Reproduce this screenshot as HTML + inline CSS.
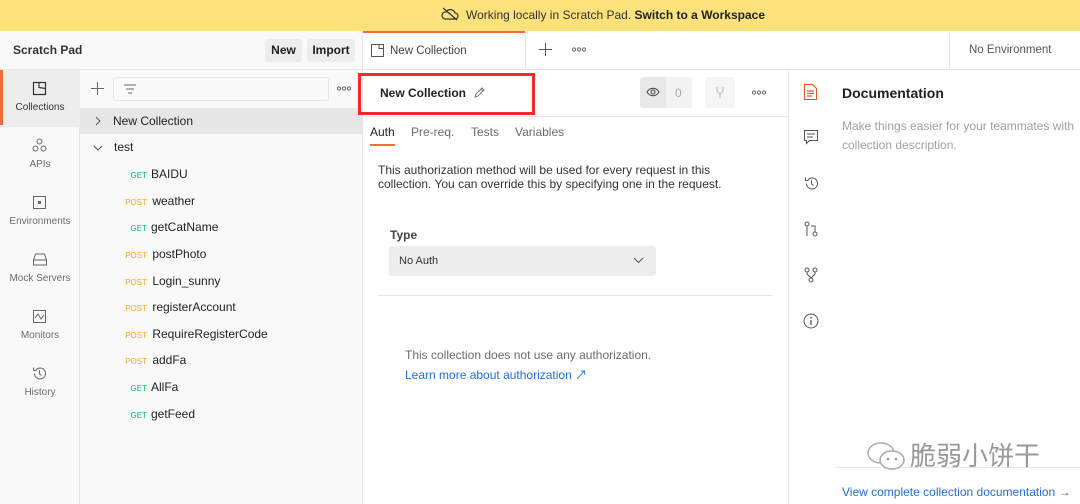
<!DOCTYPE html>
<html><head><meta charset="utf-8"><style>
*{box-sizing:border-box;margin:0;padding:0}
body{width:1080px;height:504px;overflow:hidden;background:#fff;font-family:"Liberation Sans","Noto Sans CJK SC",sans-serif;font-size:12px;color:#212121;position:relative}
.a{position:absolute}
.banner{left:0;top:0;width:1080px;height:31px;background:#fde17a;line-height:31px;font-size:12px;color:#333;padding-left:441px}
.get{color:#0cbb52;font-size:8px;display:inline-block;width:20px;text-align:right;margin-right:4px}
.post{color:#f5a623;font-size:8px;display:inline-block;width:24px;text-align:right;margin-right:2px}
.side{font-size:10px;color:#6b6b6b;text-align:center;width:78px}
.item{left:80px;width:282px;height:26px;line-height:26px;font-size:12px;color:#212121}
</style></head><body>
<div class="a banner"><svg width="18" height="14" viewBox="0 0 18 14" style="vertical-align:-2px;margin-right:7px"><path d="M4 12h10a3 3 0 0 0 0-6 5 5 0 0 0-9-1A3.5 3.5 0 0 0 4 12zM2 1l14 12" fill="none" stroke="#333" stroke-width="1.2"/></svg>Working locally in Scratch Pad. <b style="color:#222">Switch to a Workspace</b></div>
<div class="a" style="left:0;top:31px;width:363px;height:39px;background:#f9f9f9;border-bottom:1px solid #e6e6e6;border-right:1px solid #e6e6e6"></div>
<div class="a" style="left:13px;top:43px;font-size:12px;font-weight:bold;color:#333">Scratch Pad</div>
<div class="a" style="left:265px;top:39px;width:37px;height:23px;background:#ededed;border-radius:3px;text-align:center;line-height:23px;font-weight:bold;font-size:12px">New</div>
<div class="a" style="left:307px;top:39px;width:48px;height:23px;background:#ededed;border-radius:3px;text-align:center;line-height:23px;font-weight:bold;font-size:12px">Import</div>
<div class="a" style="left:0;top:70px;width:80px;height:434px;background:#f9f9f9;border-right:1px solid #e6e6e6"></div>
<div class="a" style="left:0;top:70px;width:3px;height:55px;background:#f26b3a"></div>
<div class="a" style="left:3px;top:70px;width:77px;height:57px;background:#ededed"></div>
<svg class="a" style="left:32px;top:81px" width="15" height="15"><path d="M1.5 1.5h12v12h-12zM7 1.5v5l6.5 1" fill="none" stroke="#333" stroke-width="1.2"/></svg>
<div class="a side" style="left:1px;top:102px;color:#333">Collections</div>
<svg class="a" style="left:32px;top:138px" width="15" height="15"><circle cx="7.5" cy="3.5" r="2.5" fill="none" stroke="#666"/><circle cx="3.5" cy="10.5" r="2.5" fill="none" stroke="#666"/><circle cx="11.5" cy="10.5" r="2.5" fill="none" stroke="#666"/></svg>
<div class="a side" style="left:1px;top:159px">APIs</div>
<svg class="a" style="left:32px;top:195px" width="15" height="15"><rect x="1.5" y="1.5" width="12" height="12" fill="none" stroke="#666"/><rect x="6" y="6" width="3" height="3" fill="#666"/></svg>
<div class="a side" style="left:1px;top:216px">Environments</div>
<svg class="a" style="left:32px;top:252px" width="16" height="15"><path d="M1.5 8l2-6h9l2 6v5h-13zM1.5 8h13" fill="none" stroke="#666"/></svg>
<div class="a side" style="left:1px;top:273px">Mock Servers</div>
<svg class="a" style="left:32px;top:309px" width="15" height="15"><rect x="1.5" y="1.5" width="12" height="12" fill="none" stroke="#666"/><path d="M3 9l3-4 3 5 3-4" fill="none" stroke="#666"/></svg>
<div class="a side" style="left:1px;top:330px">Monitors</div>
<svg class="a" style="left:32px;top:366px" width="15" height="15"><path d="M2.5 7.5a5.5 5.5 0 1 0 1.6-3.9M1.5 1.5v3h3M7.5 4.5v3.5l2 1.5" fill="none" stroke="#666"/></svg>
<div class="a side" style="left:1px;top:387px">History</div>
<div class="a" style="left:80px;top:70px;width:283px;height:434px;background:#f9f9f9;border-right:1px solid #e6e6e6"></div>
<svg class="a" style="left:91px;top:82px" width="13" height="13"><path d="M6.5 0v13M0 6.5h13" stroke="#666"/></svg>
<div class="a" style="left:113px;top:77px;width:216px;height:24px;border:1px solid #e6e6e6;background:#f9f9f9;border-radius:3px"></div>
<svg class="a" style="left:123px;top:83px" width="14" height="12"><path d="M1 2h12M3 6h8M5 10h4" stroke="#666"/></svg>
<svg class="a" style="left:337px;top:86px" width="14" height="5"><circle cx="2" cy="2.5" r="1.6" fill="none" stroke="#666"/><circle cx="7" cy="2.5" r="1.6" fill="none" stroke="#666"/><circle cx="12" cy="2.5" r="1.6" fill="none" stroke="#666"/></svg>
<div class="a" style="left:80px;top:108px;width:282px;height:26px;background:#e6e6e6"></div>
<svg class="a" style="left:95px;top:116px" width="6" height="10"><path d="M1 1l4 4-4 4" fill="none" stroke="#555"/></svg>
<div class="a item" style="top:108px;padding-left:33px">New Collection</div>
<svg class="a" style="left:93px;top:145px" width="10" height="6"><path d="M1 1l4 4 4-4" fill="none" stroke="#555"/></svg>
<div class="a item" style="top:134px;padding-left:34px">test</div>
<div class="a item" style="top:161px;padding-left:47px"><span class="get">GET</span>BAIDU</div>
<div class="a item" style="top:188px;padding-left:43px"><span class="post">POST</span> weather</div>
<div class="a item" style="top:214px;padding-left:47px"><span class="get">GET</span>getCatName</div>
<div class="a item" style="top:241px;padding-left:43px"><span class="post">POST</span> postPhoto</div>
<div class="a item" style="top:268px;padding-left:43px"><span class="post">POST</span> Login_sunny</div>
<div class="a item" style="top:294px;padding-left:43px"><span class="post">POST</span> registerAccount</div>
<div class="a item" style="top:321px;padding-left:43px"><span class="post">POST</span> RequireRegisterCode</div>
<div class="a item" style="top:347px;padding-left:43px"><span class="post">POST</span> addFa</div>
<div class="a item" style="top:374px;padding-left:47px"><span class="get">GET</span>AllFa</div>
<div class="a item" style="top:401px;padding-left:47px"><span class="get">GET</span>getFeed</div>
<div class="a" style="left:363px;top:31px;width:717px;height:39px;border-bottom:1px solid #e6e6e6"></div>
<div class="a" style="left:363px;top:31px;width:162px;height:2px;background:#f26b3a"></div>
<div class="a" style="left:525px;top:33px;width:1px;height:37px;background:#e6e6e6"></div>
<svg class="a" style="left:371px;top:44px" width="13" height="13"><path d="M.5.5h12v12H.5zM8 .5v4h4.5" fill="none" stroke="#555"/></svg>
<div class="a" style="left:390px;top:45px;color:#444;font-size:11.5px">New Collection</div>
<svg class="a" style="left:539px;top:43px" width="13" height="13"><path d="M6.5 0v13M0 6.5h13" stroke="#555"/></svg>
<svg class="a" style="left:572px;top:47px" width="14" height="5"><circle cx="2" cy="2.5" r="1.6" fill="none" stroke="#666"/><circle cx="7" cy="2.5" r="1.6" fill="none" stroke="#666"/><circle cx="12" cy="2.5" r="1.6" fill="none" stroke="#666"/></svg>
<div class="a" style="left:949px;top:33px;width:1px;height:37px;background:#e6e6e6"></div>
<div class="a" style="left:969px;top:44px;color:#555;font-size:11.5px">No Environment</div>
<div class="a" style="left:363px;top:116px;width:425px;height:1px;background:#e6e6e6"></div>
<div class="a" style="left:380px;top:86px;font-weight:bold;font-size:12px">New Collection</div>
<svg class="a" style="left:474px;top:86px" width="12" height="12"><path d="M1 11l1-3 6-6 2 2-6 6zM7 3l2 2" fill="none" stroke="#777"/></svg>
<div class="a" style="left:358px;top:73px;width:177px;height:42px;border:3px solid #ef2b2b"></div>
<div class="a" style="left:640px;top:77px;width:52px;height:31px;background:#f2f2f2;border-radius:3px"></div>
<div class="a" style="left:640px;top:77px;width:26px;height:31px;background:#e8e8e8;border-radius:3px 0 0 3px"></div>
<svg class="a" style="left:646px;top:86px" width="14" height="12"><path d="M1 6c3-5 9-5 12 0-3 5-9 5-12 0z" fill="none" stroke="#444"/><circle cx="7" cy="6" r="2" fill="none" stroke="#444"/></svg>
<div class="a" style="left:675px;top:86px;color:#aaa">0</div>
<div class="a" style="left:705px;top:77px;width:30px;height:31px;background:#f5f5f5;border-radius:3px"></div>
<svg class="a" style="left:714px;top:86px" width="12" height="13"><path d="M3 1v4l3 3 3-3V1M6 8v4" fill="none" stroke="#bbb"/></svg>
<svg class="a" style="left:752px;top:90px" width="14" height="5"><circle cx="2" cy="2.5" r="1.6" fill="none" stroke="#666"/><circle cx="7" cy="2.5" r="1.6" fill="none" stroke="#666"/><circle cx="12" cy="2.5" r="1.6" fill="none" stroke="#666"/></svg>
<div class="a" style="left:370px;top:125px;color:#212121">Auth</div>
<div class="a" style="left:370px;top:144px;width:25px;height:2px;background:#f26b3a"></div>
<div class="a" style="left:411px;top:125px;color:#6b6b6b">Pre-req.</div>
<div class="a" style="left:471px;top:125px;color:#6b6b6b">Tests</div>
<div class="a" style="left:515px;top:125px;color:#6b6b6b">Variables</div>
<div class="a" style="left:378px;top:163px;width:380px;line-height:14px;color:#333">This authorization method will be used for every request in this collection. You can override this by specifying one in the request.</div>
<div class="a" style="left:390px;top:228px;font-weight:bold;color:#444">Type</div>
<div class="a" style="left:389px;top:246px;width:267px;height:30px;background:#ededed;border-radius:3px;padding-left:10px;line-height:30px;font-size:11px;color:#333">No Auth</div>
<svg class="a" style="left:633px;top:257px" width="11" height="8"><path d="M1 1l4.5 4.5L10 1" fill="none" stroke="#555"/></svg>
<div class="a" style="left:378px;top:295px;width:395px;height:1px;background:#e6e6e6"></div>
<div class="a" style="left:405px;top:348px;color:#6b6b6b">This collection does not use any authorization.</div>
<div class="a" style="left:405px;top:366px;color:#1f6fde">Learn more about authorization ↗</div>
<div class="a" style="left:788px;top:70px;width:1px;height:434px;background:#e6e6e6"></div>
<svg class="a" style="left:804px;top:84px" width="13" height="16"><path d="M.5.5h8l4 4v11H.5z" fill="none" stroke="#e5532d"/><path d="M3 7h7M3 9.5h7M3 12h5" stroke="#e5532d" stroke-width="1.3"/></svg>
<svg class="a" style="left:804px;top:130px" width="14" height="15"><path d="M.5.5h13v10h-8l-3 3v-3H.5z" fill="none" stroke="#555"/><path d="M3 4h8M3 7h6" stroke="#555"/></svg>
<svg class="a" style="left:804px;top:176px" width="15" height="15"><path d="M2.5 7.5a5.5 5.5 0 1 0 1.6-3.9M1.5 1.5v3h3M7.5 4.5v3.5l2 1.5" fill="none" stroke="#555"/></svg>
<svg class="a" style="left:804px;top:221px" width="14" height="16"><circle cx="3" cy="3" r="2" fill="none" stroke="#555"/><circle cx="11" cy="13" r="2" fill="none" stroke="#555"/><path d="M3 5v10M11 11V5H7" fill="none" stroke="#555"/></svg>
<svg class="a" style="left:804px;top:267px" width="14" height="16"><circle cx="3" cy="3" r="2" fill="none" stroke="#555"/><circle cx="11" cy="3" r="2" fill="none" stroke="#555"/><circle cx="7" cy="13" r="2" fill="none" stroke="#555"/><path d="M3 5v2l4 4 4-4V5" fill="none" stroke="#555"/></svg>
<svg class="a" style="left:803px;top:313px" width="16" height="16"><circle cx="8" cy="8" r="7" fill="none" stroke="#555"/><path d="M8 7v5" stroke="#555" stroke-width="1.3"/><circle cx="8" cy="4.6" r=".9" fill="#555"/></svg>
<div class="a" style="left:842px;top:85px;font-size:14px;font-weight:bold;color:#212121">Documentation</div>
<div class="a" style="left:842px;top:117px;width:245px;line-height:19px;color:#a0a0a0;white-space:nowrap">Make things easier for your teammates with<br>collection description.</div>
<div class="a" style="left:835px;top:467px;width:245px;height:1px;background:#e6e6e6"></div>
<svg class="a" style="left:866px;top:440px" width="42" height="34"><ellipse cx="15" cy="13" rx="13" ry="10" fill="#fff" stroke="#aaa" stroke-width="1.5"/><ellipse cx="26" cy="20" rx="12" ry="9" fill="#fff" stroke="#aaa" stroke-width="1.5"/><circle cx="22" cy="19" r="1.3" fill="#999"/><circle cx="30" cy="19" r="1.3" fill="#999"/></svg>
<div class="a" style="left:910px;top:438px;font-size:26px;color:#999;font-family:'Noto Sans CJK SC',sans-serif;line-height:34px">脆弱小饼干</div>
<div class="a" style="left:842px;top:485px;color:#1f6fde">View complete collection documentation →</div>
</body></html>
